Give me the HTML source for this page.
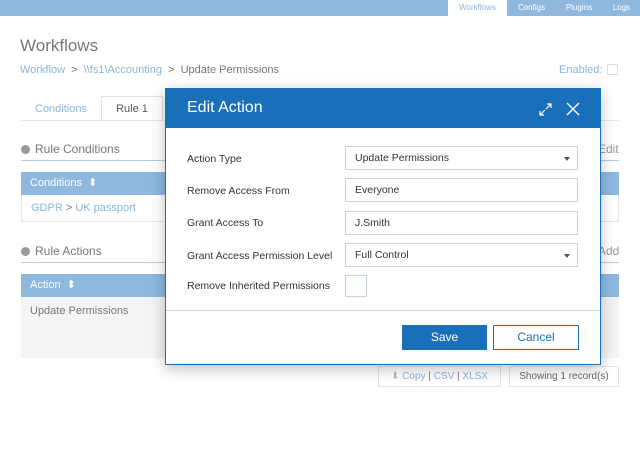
<!DOCTYPE html>
<html><head><meta charset="utf-8"><style>
*{box-sizing:border-box;margin:0;padding:0}
body{width:640px;height:450px;overflow:hidden;background:#fff;font-family:"Liberation Sans",sans-serif;position:relative;color:#777}
.a{position:absolute}
.top{left:0;top:0;width:640px;height:16px;background:#8fb8df}
.tt{top:0;height:16px;font-size:8px;color:#fff;text-align:center;line-height:16px;background:#8fb8df}
.blue{color:#8ab4dc}
.hdr{background:#8fb8df;color:#fff;font-size:11px;line-height:23px;padding-left:9px}
.info{display:inline-block;width:9px;height:9px;border-radius:50%;background:#999;vertical-align:-1px;margin-right:5px}
.lbl{left:21px;font-size:10.5px;color:#333}
.inp{left:179px;width:233px;height:24px;border:1px solid #c9d3de;font-size:10.5px;color:#333;padding-left:9px;line-height:22px;background:#fff}
.car{position:absolute;right:7px;top:10px;border-left:3.5px solid transparent;border-right:3.5px solid transparent;border-top:4px solid #555}
</style></head><body>
<div class="a top"></div>
<div class="a tt" style="left:448px;width:59px;background:#fff;color:#8ab4dc">Workflows</div>
<div class="a tt" style="left:508px;width:47px">Configs</div>
<div class="a tt" style="left:556px;width:46px">Plugins</div>
<div class="a tt" style="left:603px;width:37px">Logs</div>
<div class="a" style="left:20px;top:36px;font-size:17px;color:#777">Workflows</div>
<div class="a" style="left:20px;top:64px;font-size:11px;color:#777"><span class="blue">Workflow</span> &nbsp;&gt;&nbsp; <span class="blue">\\fs1\Accounting</span> &nbsp;&gt;&nbsp; Update Permissions</div>
<div class="a blue" style="left:559px;top:64px;font-size:11px">Enabled:</div>
<div class="a" style="left:607px;top:64px;width:11px;height:11px;border:1px solid #ddd"></div>
<div class="a blue" style="left:35px;top:103px;font-size:11px">Conditions</div>
<div class="a" style="left:101px;top:96px;width:62px;height:25px;border:1px solid #e2e2e2;border-bottom:none;font-size:11px;color:#555;text-align:center;line-height:24px;background:#fff">Rule 1</div>
<div class="a" style="left:21px;top:120px;width:598px;height:1px;background:#e6e6e6"></div>
<div class="a" style="left:21px;top:142px;font-size:12px"><span class="info"></span>Rule Conditions</div>
<div class="a" style="left:21px;top:160px;width:598px;height:1px;background:#b8cde3"></div>
<div class="a" style="left:598px;top:142px;font-size:12px;color:#999">Edit</div>
<div class="a hdr" style="left:21px;top:172px;width:598px">Conditions &nbsp;⬍</div>
<div class="a" style="left:21px;top:195px;width:598px;height:27px;border:1px solid #e6e6e6;border-top:none;font-size:11px;line-height:27px;padding-left:9px"><span class="blue">GDPR</span> &gt; <span class="blue">UK passport</span></div>
<div class="a" style="left:21px;top:244px;font-size:12px"><span class="info"></span>Rule Actions</div>
<div class="a" style="left:21px;top:262px;width:598px;height:1px;background:#b8cde3"></div>
<div class="a" style="left:598px;top:244px;font-size:12px;color:#999">Add</div>
<div class="a hdr" style="left:21px;top:274px;width:598px">Action &nbsp;⬍</div>
<div class="a" style="left:21px;top:297px;width:598px;height:61px;background:#f3f4f6;font-size:11px;padding:8px 9px">Update Permissions</div>
<div class="a" style="left:378px;top:366px;width:123px;height:21px;border:1px solid #e3e3e3;font-size:10px;line-height:19px;padding-left:12px"><span style="color:#bbb">⬇</span> <span class="blue">Copy</span> | <span class="blue">CSV</span> | <span class="blue">XLSX</span></div>
<div class="a" style="left:509px;top:366px;width:110px;height:21px;border:1px solid #e3e3e3;font-size:10px;line-height:19px;text-align:center;color:#666">Showing 1 record(s)</div>

<div class="a" style="left:165px;top:88px;width:436px;height:277px;background:#fff;border:1px solid #1a6fba;box-shadow:0 4px 14px rgba(0,0,0,.25)">
<div class="a" style="left:-1px;top:-1px;width:436px;height:40px;background:#1a6fba;color:#fff;font-size:16px;line-height:40px;padding-left:22px">Edit Action</div>
<svg class="a" style="left:373px;top:14px" width="13" height="13" viewBox="0 0 13 13" fill="none" stroke="#fff" stroke-width="1.2"><path d="M7 6L12 1M8 1h4v4M6 7L1 12M1 8v4h4"/></svg>
<svg class="a" style="left:400px;top:13px" width="14" height="14" viewBox="0 0 14 14" stroke="#fff" stroke-width="1.4"><path d="M1 1L13 13M13 1L1 13"/></svg>
<div class="a lbl" style="top:64px">Action Type</div>
<div class="a lbl" style="top:96px">Remove Access From</div>
<div class="a lbl" style="top:128px">Grant Access To</div>
<div class="a lbl" style="top:161px">Grant Access Permission Level</div>
<div class="a lbl" style="top:191px">Remove Inherited Permissions</div>
<div class="a inp" style="top:57px">Update Permissions<span class="car"></span></div>
<div class="a inp" style="top:89px">Everyone</div>
<div class="a inp" style="top:122px">J.Smith</div>
<div class="a inp" style="top:154px">Full Control<span class="car"></span></div>
<div class="a" style="left:179px;top:186px;width:22px;height:22px;border:1px solid #c9d3de"></div>
<div class="a" style="left:0;top:221px;width:434px;height:1px;background:#c9d6e5"></div>
<div class="a" style="left:236px;top:236px;width:85px;height:25px;background:#1a6fba;color:#fff;font-size:12px;text-align:center;line-height:25px">Save</div>
<div class="a" style="left:327px;top:236px;width:86px;height:25px;border:1px solid #1a6fba;color:#1a6fba;font-size:12px;text-align:center;line-height:23px">Cancel</div>
</div>
</body></html>
